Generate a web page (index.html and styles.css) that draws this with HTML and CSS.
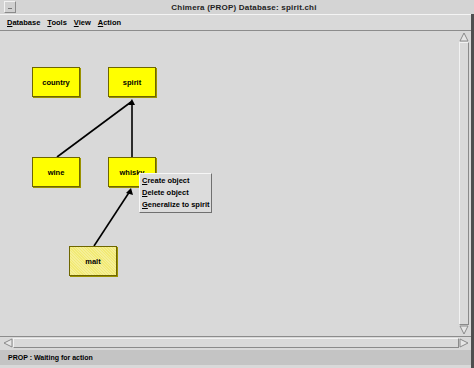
FILE: index.html
```html
<!DOCTYPE html>
<html lang="en">
<head>
  <meta charset="UTF-8">
  <title>Chimera (PROP) Database: spirit.chi</title>
  <link rel="stylesheet" href="styles.css">
</head>
<body>

<div class="window">
  <div class="titlebar">
    <span class="winbox"><span class="winbox-mark"></span></span>
    <span class="title">Chimera (PROP) Database: spirit.chi</span>
  </div>

  <div class="frame">
    <div class="menubar">
      <span class="menu"><u>D</u>atabase</span>
      <span class="menu"><u>T</u>ools</span>
      <span class="menu"><u>V</u>iew</span>
      <span class="menu"><u>A</u>ction</span>
    </div>

    <div class="workarea">
      <div class="canvas">
        <svg class="links" width="456" height="304">
          <g stroke="#000" stroke-width="1.6" fill="none">
            <line x1="57" y1="126" x2="131" y2="71"></line>
            <line x1="132" y1="126" x2="132" y2="71"></line>
            <line x1="94" y1="215" x2="130" y2="160"></line>
          </g>
          <g fill="#000">
            <polygon points="132,68 128,74 135,74"></polygon>
            <polygon points="131,157 126,162 133,164"></polygon>
          </g>
        </svg>

        <div class="node" style="left:32px;top:36px">country</div>
        <div class="node" style="left:108px;top:36px">spirit</div>
        <div class="node" style="left:32px;top:126px">wine</div>
        <div class="node" style="left:108px;top:126px">whisky</div>
        <div class="node node-selected" style="left:69px;top:215px">malt</div>

        <div class="popup">
          <div class="popup-item"><u>C</u>reate object</div>
          <div class="popup-item"><u>D</u>elete object</div>
          <div class="popup-item"><u>G</u>eneralize to spirit</div>
        </div>
      </div>

      <div class="vscroll">
        <svg class="arrow" width="10" height="10"><polygon points="5,1 9,9 1,9"></polygon></svg>
        <div class="thumb"></div>
        <svg class="arrow" width="10" height="10"><polygon points="1,1 9,1 5,9"></polygon></svg>
      </div>
    </div>

    <div class="hscroll">
      <svg class="arrow" width="10" height="10"><polygon points="1,5 9,1 9,9"></polygon></svg>
      <div class="thumb"></div>
      <svg class="arrow" width="10" height="10"><polygon points="1,1 9,5 1,9"></polygon></svg>
    </div>

    <div class="status">PROP : Waiting for action</div>
  </div>
</div>

</body>
</html>
```

FILE: styles.css
```css
body {
  margin: 0;
  width: 474px;
  height: 368px;
  overflow: hidden;
  background: #d9d9d9;
  font-family: 'Liberation Sans', Arial, sans-serif;
  color: #000;
}

.window {
  display: flex;
  flex-direction: column;
  height: 368px;
}

.titlebar {
  position: relative;
  height: 14px;
  background: #d4d4d4;
  display: flex;
  align-items: center;
  justify-content: center;
}

.winbox {
  position: absolute;
  left: 4px;
  top: 1px;
  width: 10px;
  height: 10px;
  border: 1px solid;
  border-color: #f2f2f2 #8a8a8a #8a8a8a #f2f2f2;
  background: #d0d0d0;
}

.winbox-mark {
  position: absolute;
  left: 3px;
  top: 3px;
  width: 4px;
  height: 3px;
  border-bottom: 1px solid #777;
}

.title {
  font-size: 8px;
  font-weight: bold;
  color: #222;
  letter-spacing: 0.2px;
  margin-left: 14px;
}

.frame {
  flex: 1;
  display: flex;
  flex-direction: column;
  border-right: 3px solid #4f4f4f;
}

.menubar {
  height: 15px;
  border-top: 1px solid #f4f4f4;
  border-bottom: 1px solid #8c8c8c;
  display: flex;
  align-items: center;
  gap: 7px;
  padding-left: 7px;
}

.menu {
  font-size: 7.5px;
  font-weight: bold;
}

.workarea {
  flex: 1;
  display: flex;
  border-bottom: 1px solid #8c8c8c;
}

.canvas {
  flex: 1;
  position: relative;
}

.links {
  position: absolute;
  left: 0;
  top: 0;
}

.node {
  position: absolute;
  box-sizing: border-box;
  width: 48px;
  height: 30px;
  background: #ffff00;
  border: 1px solid #6e6600;
  box-shadow: 1px 1px 0 #9a9200;
  font-size: 7.5px;
  font-weight: bold;
  display: flex;
  align-items: center;
  justify-content: center;
}

.node-selected {
  background-color: #f2ea74;
  background-image: repeating-linear-gradient(45deg, rgba(255, 255, 255, 0.25) 0 1px, transparent 1px 2px);
}

.popup {
  position: absolute;
  left: 139px;
  top: 142px;
  width: 71px;
  padding: 1px 0;
  background: #dcdcdc;
  border: 1px solid;
  border-color: #f6f6f6 #707070 #707070 #f6f6f6;
}

.popup-item {
  font-size: 7.5px;
  font-weight: bold;
  line-height: 12px;
  padding-left: 2px;
  white-space: nowrap;
}

.vscroll {
  width: 10px;
  margin: 1px 2px 1px 1px;
  display: flex;
  flex-direction: column;
}

.hscroll {
  height: 10px;
  margin: 1px 2px 1px 3px;
  display: flex;
}

.arrow {
  display: block;
  flex: none;
}

.arrow polygon {
  fill: #e6e6e6;
  stroke: #8a8a8a;
  stroke-width: 1;
}

.thumb {
  flex: 1;
  background: #d9d9d9;
  border: 1px solid;
  border-color: #f2f2f2 #8a8a8a #8a8a8a #f2f2f2;
}

.status {
  height: 15px;
  margin-top: 1px;
  margin-bottom: 3px;
  background: #c4c4c4;
  font-size: 7px;
  font-weight: bold;
  padding-left: 8px;
  display: flex;
  align-items: center;
}
```
